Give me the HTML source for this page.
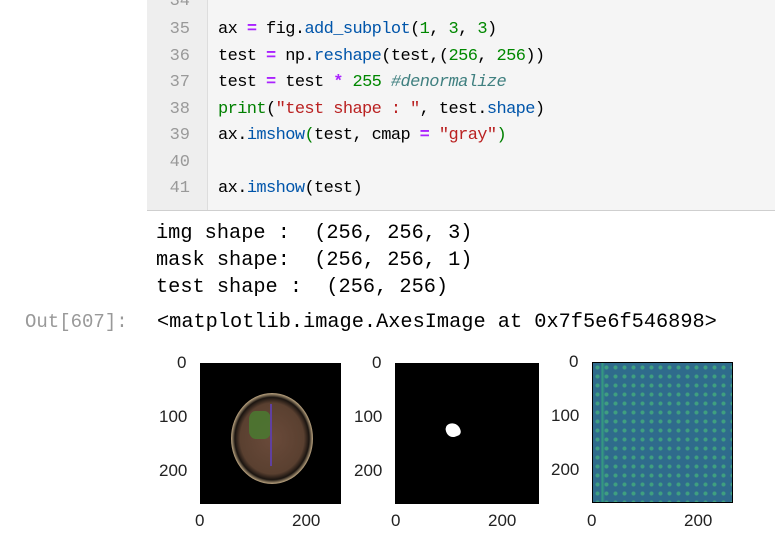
<!DOCTYPE html>
<html><head><style>
body{margin:0;width:775px;height:547px;background:#fff;position:relative;overflow:hidden;font-family:"Liberation Mono",monospace}
.cell{position:absolute;left:147px;top:-10px;width:640px;height:221px;background:#f5f5f5;border:1px solid #cfcfcf;box-sizing:border-box}
.gut{position:absolute;left:147px;top:-10px;width:61px;height:220px;background:#eeeeee;border-right:1px solid #ddd;box-sizing:border-box}
.ln{position:absolute;left:150px;width:40px;text-align:right;color:#999;font-size:17px}
.code{position:absolute;left:218px;font-size:17px;letter-spacing:-0.6px;color:#000;white-space:pre}
.k{color:#aa22ff;font-weight:bold}.f{color:#0055aa}.n{color:#008800}.s{color:#ba2121}.c{color:#408080;font-style:italic}.b{color:#008000}
.out{position:absolute;left:156px;font-size:20.3px;white-space:pre;color:#000}
.tick{position:absolute;font-family:"Liberation Sans",sans-serif;font-size:17px;color:#222}
.ax{position:absolute;border:1px solid #000;box-sizing:border-box}
</style></head><body>
<div class="cell"></div><div class="gut"></div>
<div class="ln" style="top:-8px">34</div>
<div class="ln" style="top:20px">35</div><div class="code" style="top:20px">ax <span class="k">=</span> fig.<span class="f">add_subplot</span>(<span class="n">1</span>, <span class="n">3</span>, <span class="n">3</span>)</div>
<div class="ln" style="top:47px">36</div><div class="code" style="top:47px">test <span class="k">=</span> np.<span class="f">reshape</span>(test,(<span class="n">256</span>, <span class="n">256</span>))</div>
<div class="ln" style="top:73px">37</div><div class="code" style="top:73px">test <span class="k">=</span> test <span class="k">*</span> <span class="n">255</span> <span class="c">#denormalize</span></div>
<div class="ln" style="top:100px">38</div><div class="code" style="top:100px"><span class="b">print</span>(<span class="s">"test shape : "</span>, test.<span class="f">shape</span>)</div>
<div class="ln" style="top:126px">39</div><div class="code" style="top:126px">ax.<span class="f">imshow</span><span class="b">(</span>test, cmap <span class="k">=</span> <span class="s">"gray"</span><span class="b">)</span></div>
<div class="ln" style="top:153px">40</div>
<div class="ln" style="top:179px">41</div><div class="code" style="top:179px">ax.<span class="f">imshow</span>(test)</div>
<div class="out" style="top:222px">img shape :  (256, 256, 3)</div>
<div class="out" style="top:249px">mask shape:  (256, 256, 1)</div>
<div class="out" style="top:276px">test shape :  (256, 256)</div>
<div class="out" style="top:311px;left:25px;color:#999;font-size:19px">Out[607]:</div>
<div class="out" style="top:311px;left:157px">&lt;matplotlib.image.AxesImage at 0x7f5e6f546898&gt;</div>

<div class="ax" style="left:200px;top:363px;width:141px;height:141px;background:#000">
<div style="position:absolute;left:30px;top:29px;width:82px;height:91px;border-radius:50%;background:radial-gradient(ellipse,#6a4a3a 0%,#5a4030 55%,#1a1410 64%,#b09a78 70%,#9a80a0 82%,#6a40a0 92%,#000 100%)"></div>
<div style="position:absolute;left:48px;top:47px;width:22px;height:28px;background:#4a7a30;border-radius:30%;opacity:.85"></div>
<div style="position:absolute;left:69px;top:40px;width:2px;height:62px;background:#6040a0"></div>
</div>
<div class="ax" style="left:395px;top:363px;width:144px;height:141px;background:#000">
<div style="position:absolute;left:50px;top:59px;width:14px;height:14px;background:#fff;border-radius:40% 60% 30% 50%;transform:rotate(-20deg)"></div>
</div>
<div class="ax" style="left:592px;top:362px;width:141px;height:141px;background:#2f6b8c;background-image:radial-gradient(circle,#3fa080 1.5px,transparent 2.5px),linear-gradient(90deg,transparent 8px,#35a080 9px,transparent 12px);background-size:9px 9px,141px 141px"></div>

<div class="tick" style="left:177px;top:353px">0</div>
<div class="tick" style="left:159px;top:407px">100</div>
<div class="tick" style="left:159px;top:461px">200</div>
<div class="tick" style="left:195px;top:511px">0</div>
<div class="tick" style="left:292px;top:511px">200</div>
<div class="tick" style="left:372px;top:353px">0</div>
<div class="tick" style="left:354px;top:407px">100</div>
<div class="tick" style="left:354px;top:461px">200</div>
<div class="tick" style="left:391px;top:511px">0</div>
<div class="tick" style="left:488px;top:511px">200</div>
<div class="tick" style="left:569px;top:352px">0</div>
<div class="tick" style="left:551px;top:406px">100</div>
<div class="tick" style="left:551px;top:460px">200</div>
<div class="tick" style="left:587px;top:511px">0</div>
<div class="tick" style="left:684px;top:511px">200</div>
</body></html>
